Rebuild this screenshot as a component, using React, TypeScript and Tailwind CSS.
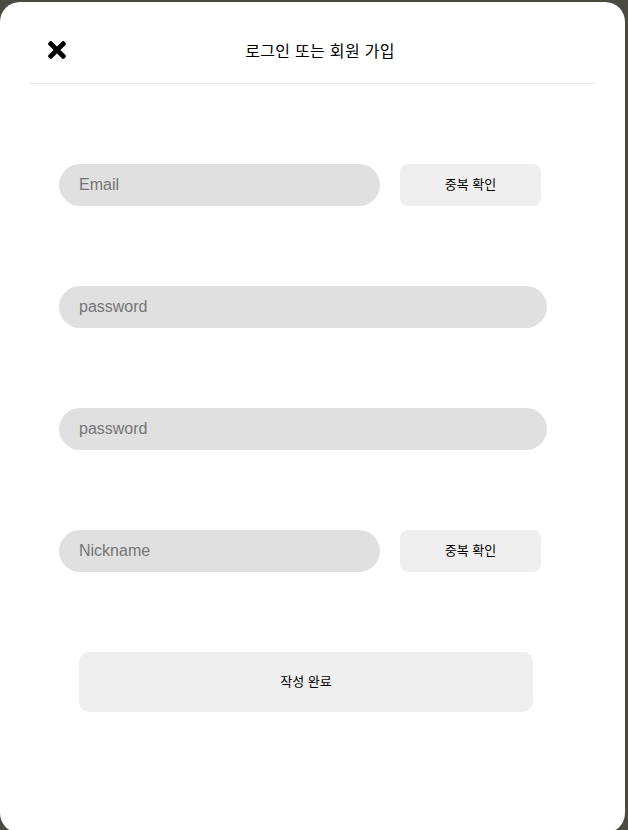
import { FaTimes } from 'react-icons/fa';

const FONT = { fontFamily: '"Liberation Sans", "Noto Sans CJK KR", sans-serif' };

function DupButton() {
  return (
    <button
      type="button"
      className="w-[141px] h-[42px] rounded-[8px] bg-[#efefef] text-[13px] text-black shrink-0"
    >
      중복 확인
    </button>
  );
}

function Field({ placeholder, wide }: { placeholder: string; wide?: boolean }) {
  return (
    <input
      type="text"
      placeholder={placeholder}
      className={`${wide ? 'w-[488px]' : 'w-[321px]'} h-[42px] rounded-full bg-[#e0e0e0] px-[20px] text-[16px] text-black placeholder:text-[#757575] outline-none`}
    />
  );
}

export default function App() {
  return (
    <div className="h-screen overflow-hidden bg-[#4b4a42] pt-[2px]" style={FONT}>
      <div className="w-[625px] h-[831px] bg-white rounded-[20px]">
        <header className="mx-[29px] h-[82px] pt-[14px] flex items-center pl-[19px] pr-[21px] border-b border-[#e8e8e8]">
          <button type="button" aria-label="닫기" className="w-[17px] h-[17px] flex items-center justify-center">
            <FaTimes size={26} className="text-black shrink-0" />
          </button>
          <h1 className="flex-1 text-center text-[16px] text-black font-normal mt-[4px] tracking-[0.3px]">로그인 또는 회원 가입</h1>
        </header>

        <form className="px-[59px] pt-[80px] flex flex-col gap-[80px]">
          <div className="flex items-center gap-[20px]">
            <Field placeholder="Email" />
            <DupButton />
          </div>
          <Field placeholder="password" wide />
          <Field placeholder="password" wide />
          <div className="flex items-center gap-[20px]">
            <Field placeholder="Nickname" />
            <DupButton />
          </div>
          <button
            type="button"
            className="ml-[20px] w-[454px] h-[60px] rounded-[10px] bg-[#efefef] text-[13px] text-black"
          >
            작성 완료
          </button>
        </form>
      </div>
    </div>
  );
}
